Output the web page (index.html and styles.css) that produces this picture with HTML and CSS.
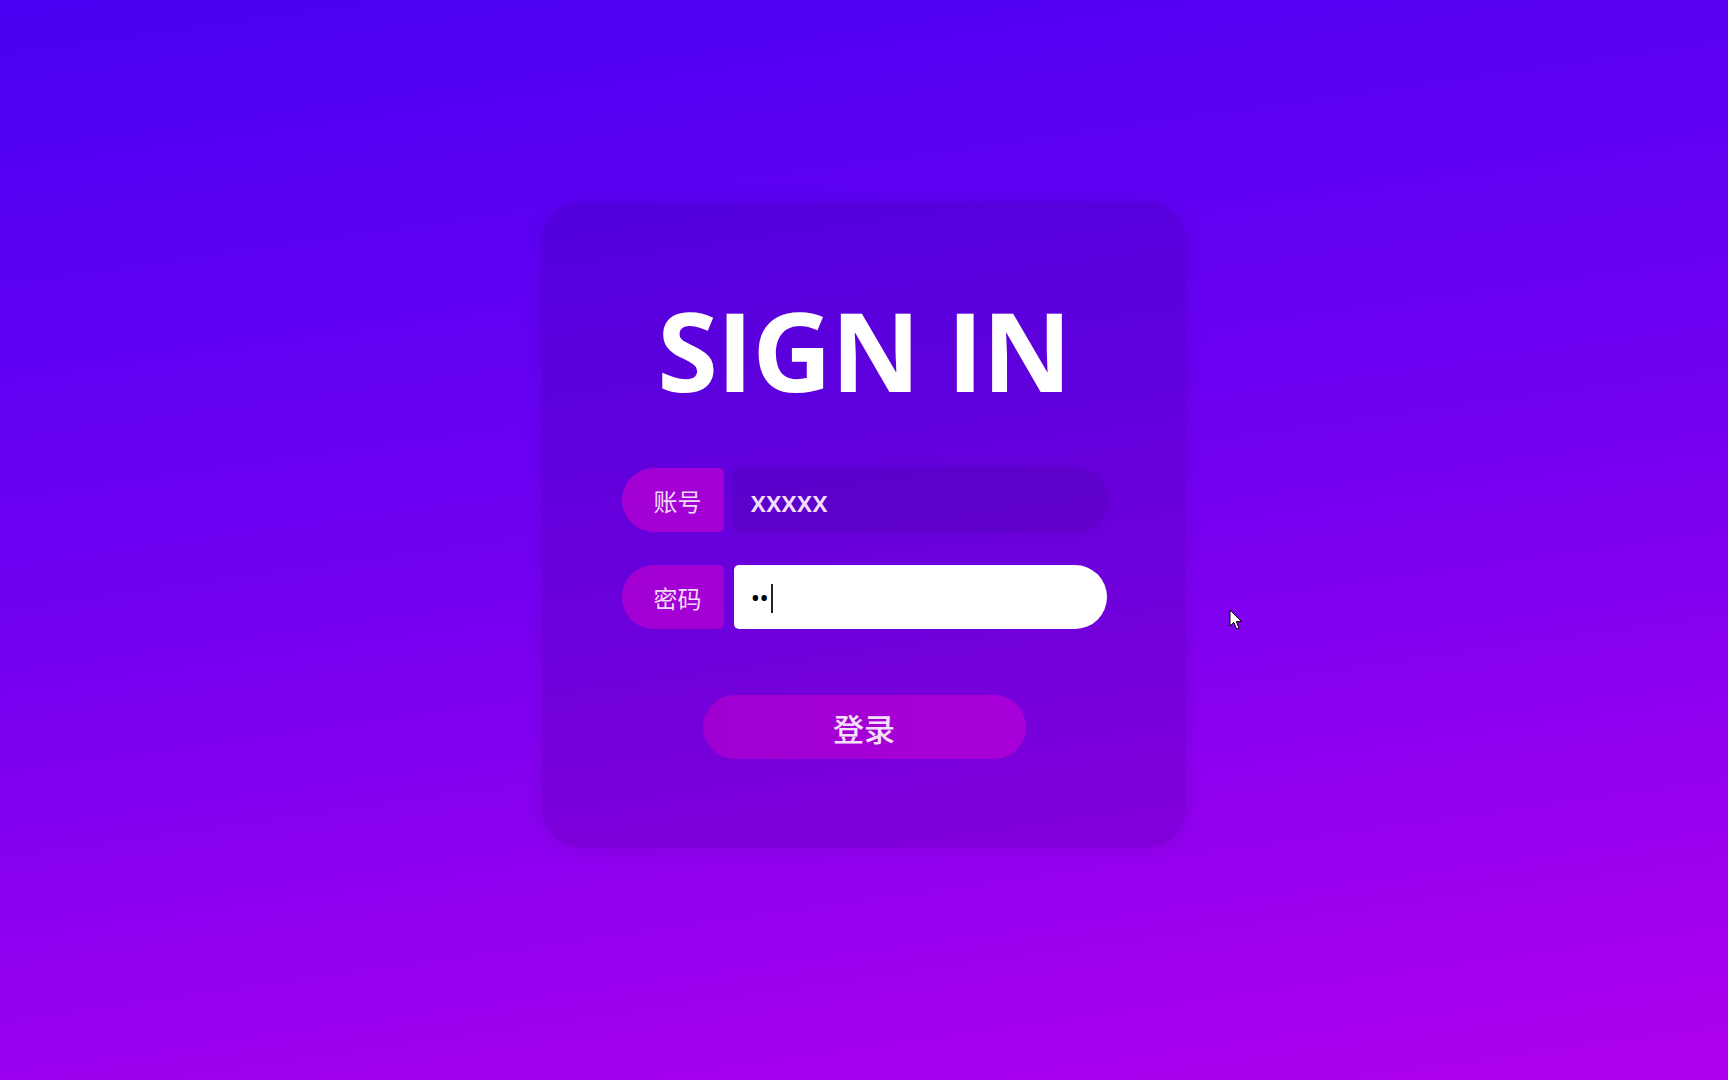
FILE: index.html
```html
<!DOCTYPE html>
<html lang="zh-CN">
<head>
<meta charset="utf-8">
<title>SIGN IN</title>
<link rel="stylesheet" href="styles.css">
</head>
<body>
  <main class="card">
    <h1 class="title">SIGN IN</h1>
    <form class="form">
      <div class="row">
        <label class="tag" for="user">账号</label>
        <input class="field field-dim" id="user" type="text" value="xxxxx">
      </div>
      <div class="row">
        <label class="tag" for="pwd">密码</label>
        <div class="field-wrap">
          <input class="field field-active" id="pwd" type="password" value="12">
          <span class="caret"></span>
        </div>
      </div>
      <button class="submit" type="button">登录</button>
    </form>
  </main>
  <svg class="pointer" width="14" height="22" viewBox="0 0 14 22">
    <path d="M1 1 L1 17 L4.8 13.4 L7.6 20 L10 19 L7.3 12.6 L12.5 12.6 Z" fill="#fff" stroke="#000" stroke-width="1" stroke-linejoin="round"/>
  </svg>
</body>
</html>
```
FILE: styles.css
```css
html, body {
  margin: 0;
  padding: 0;
}
body {
  width: 1728px;
  height: 1080px;
  overflow: hidden;
  background: linear-gradient(172deg, #4900f2 0%, #6a00f2 40%, #9200ef 75%, #b000ee 100%);
  display: flex;
  flex-direction: column;
  align-items: center;
  padding-top: 202px;
  box-sizing: border-box;
  font-family: "Open Sans", "Noto Sans CJK SC", sans-serif;
  position: relative;
}
.card {
  width: 644px;
  height: 646px;
  box-sizing: border-box;
  border-radius: 40px;
  background: rgba(20, 0, 70, 0.12);
  box-shadow: 0 0 18px rgba(30, 0, 90, 0.12);
  display: flex;
  flex-direction: column;
  align-items: center;
  padding-top: 92px;
}
.title {
  margin: 0;
  font-family: "Open Sans", sans-serif;
  font-weight: 700;
  font-size: 110px;
  line-height: 110px;
  color: #ffffff;
  letter-spacing: -1px;
}
.form {
  margin-top: 64px;
  display: flex;
  flex-direction: column;
  align-items: center;
}
.row {
  display: flex;
  gap: 10px;
  width: 485px;
  margin-bottom: 33px;
}
.row:last-of-type {
  margin-bottom: 0;
}
.tag {
  width: 102px;
  height: 64px;
  flex: none;
  border-radius: 32px 5px 5px 32px;
  background: #a200d4;
  color: #f3dcf9;
  font-family: "Noto Sans CJK SC", sans-serif;
  font-size: 24px;
  display: flex;
  align-items: center;
  justify-content: center;
  padding-left: 10px;
  box-sizing: border-box;
}
.field {
  width: 373px;
  height: 64px;
  box-sizing: border-box;
  border: none;
  outline: none;
  margin: 0;
  border-radius: 5px 32px 32px 5px;
  padding: 0 0 0 17px;
  font-family: "Open Sans", sans-serif;
}
.field-dim {
  background: rgba(30, 0, 80, 0.12);
  box-shadow: 0 0 8px rgba(30, 0, 80, 0.1);
  color: #f4dcff;
  font-size: 28px;
  font-weight: 600;
  padding-top: 2px;
}
.field-wrap {
  position: relative;
  width: 373px;
  height: 64px;
}
.field-active {
  background: #ffffff;
  color: #000000;
  font-size: 26px;
  letter-spacing: -1px;
}
.caret {
  position: absolute;
  left: 37px;
  top: 19px;
  width: 2px;
  height: 29px;
  background: #222;
}
.submit {
  margin-top: 66px;
  width: 323px;
  height: 64px;
  border: none;
  border-radius: 32px;
  background: linear-gradient(90deg, #9f00d2, #a800d8);
  color: #f6e0fb;
  font-family: "Noto Sans CJK SC", sans-serif;
  font-size: 31px;
  font-weight: 500;
  padding: 0;
  cursor: pointer;
}
.pointer {
  position: absolute;
  left: 1229px;
  top: 609px;
}
```
